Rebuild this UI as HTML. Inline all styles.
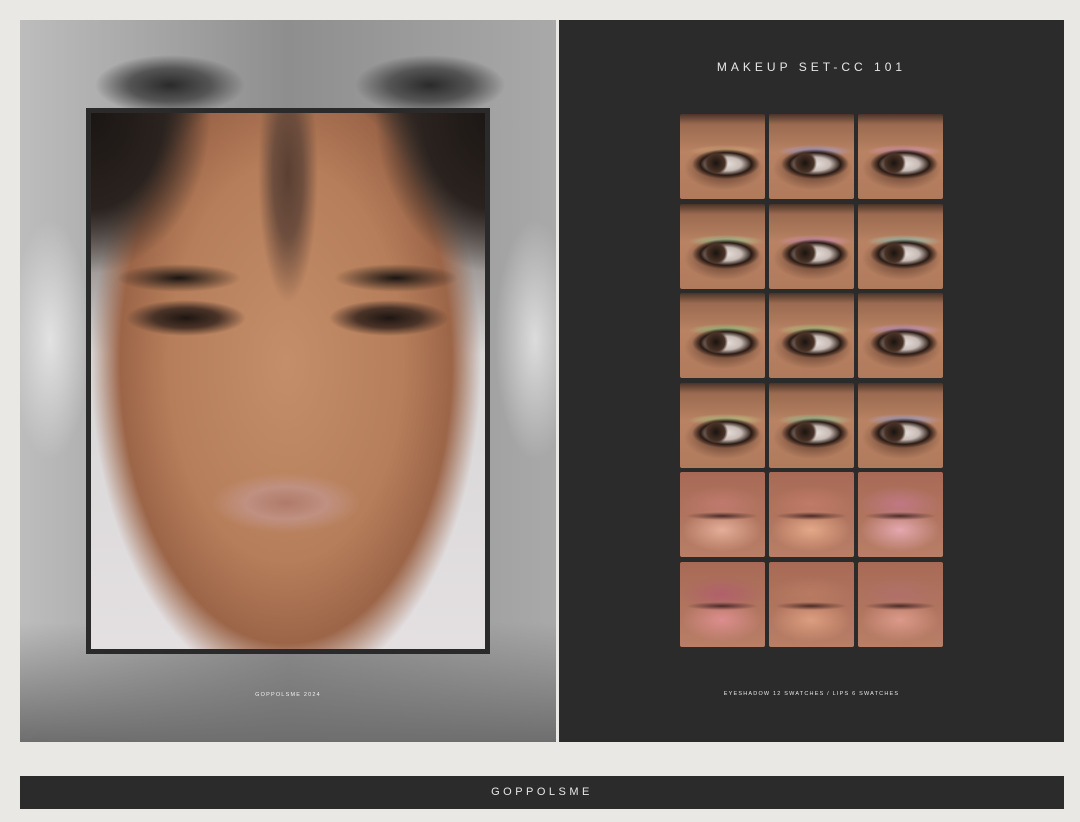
<!DOCTYPE html>
<html><head><meta charset="utf-8"><style>
*{margin:0;padding:0;box-sizing:border-box}
body{width:1080px;height:822px;background:#e9e8e4;position:relative;overflow:hidden;font-family:"Liberation Sans",sans-serif}
.abs{position:absolute}
#left{left:20px;top:20px;width:536px;height:722px;overflow:hidden;
background:
radial-gradient(ellipse 75px 30px at 150px 65px,#2a2a2a 0,#555 55%,transparent 100%),
radial-gradient(ellipse 75px 30px at 410px 65px,#2a2a2a 0,#555 55%,transparent 100%),
radial-gradient(ellipse 40px 120px at 30px 320px,#e2e2e2 0,transparent 100%),
radial-gradient(ellipse 40px 120px at 515px 320px,#dcdcdc 0,transparent 100%),
linear-gradient(90deg,#bdbdbd 0,#8e8e8e 50%,#a9a9a9 100%)}
#left:after{content:"";position:absolute;left:0;right:0;bottom:0;height:120px;background:linear-gradient(180deg,transparent,#6e6e6e)}
#frame{left:86px;top:108px;width:404px;height:546px;border:5px solid #2a2a2a;overflow:hidden;
background:
radial-gradient(ellipse 30px 130px at 197px 60px,#5a4032 0,#6e4e3e 50%,transparent 100%),
radial-gradient(ellipse 60px 18px at 95px 205px,#1e1612 0,#4a3328 55%,transparent 100%),
radial-gradient(ellipse 60px 18px at 298px 205px,#1e1612 0,#4a3328 55%,transparent 100%),
radial-gradient(ellipse 62px 14px at 88px 165px,#1a1512 0,transparent 100%),
radial-gradient(ellipse 62px 14px at 305px 165px,#1a1512 0,transparent 100%),
radial-gradient(ellipse 75px 30px at 195px 390px,#b07a6a 0,#c09080 55%,transparent 100%),
radial-gradient(ellipse 120px 160px at 0 0,#1a1614 0,#2a221e 60%,transparent 100%),
radial-gradient(ellipse 120px 160px at 404px 0,#1a1614 0,#2a221e 60%,transparent 100%),
radial-gradient(ellipse 195px 330px at 195px 250px,#c48e6a 0,#b67e5a 60%,#9c6548 85%,transparent 100%),
linear-gradient(180deg,#3a2e28 0,#d8d6d6 45%,#e4e0e2 100%)}
#right{left:559px;top:20px;width:505px;height:722px;background:#2b2b2b}
.t{left:0;width:505px;text-align:center;color:#e6e6e6}
.tile{position:absolute;width:85px;height:85px;border-radius:2px;overflow:hidden}
.eye{background:
radial-gradient(ellipse 12px 12px at 36px 49px,#1a1410 0,#4a3226 75%,transparent 100%),
radial-gradient(ellipse 34px 15px at 46px 50px,#e8e0dc 0,#c8bbb5 45%,#2a1a14 75%,transparent 100%),
radial-gradient(ellipse 40px 22px at 44px 54px,#4a2e22 0,transparent 100%),
radial-gradient(ellipse 38px 6px at 46px 37px,var(--c) 0,transparent 100%),
linear-gradient(180deg,#4a3428 0,#9a6a50 12%,#b98263 45%,#b07a5c 100%)}
.lip{background:
radial-gradient(ellipse 36px 4px at 42px 44px,#4a2a26 0,transparent 100%),
radial-gradient(ellipse 42px 18px at 42px 32px,var(--c) 0,transparent 100%),
radial-gradient(ellipse 40px 22px at 42px 58px,var(--d) 0,transparent 100%),
linear-gradient(180deg,#a86a56,#b87e66)}
#bar{left:20px;top:776px;width:1044px;height:33px;background:#2b2b2b;color:#e6e6e6;text-align:center;font-size:11px;letter-spacing:3.5px;line-height:33px}
</style></head><body>
<div id="left" class="abs"></div>
<div id="frame" class="abs"></div>
<div class="abs" style="left:20px;top:692px;width:536px;text-align:center;color:#eee;font-size:5.5px;letter-spacing:1.2px">GOPPOLSME 2024</div>
<div id="right" class="abs">
<div class="abs t" style="top:40px;font-size:12px;letter-spacing:4px">MAKEUP SET-CC 101</div>
<div class="abs t" style="top:671px;font-size:5.5px;letter-spacing:1.2px">EYESHADOW 12 SWATCHES / LIPS 6 SWATCHES</div>
</div>
<div id="tiles">
<div class="tile eye" style="left:680px;top:114px;--c:#d8b080"></div>
<div class="tile eye" style="left:769px;top:114px;--c:#a8a8e0"></div>
<div class="tile eye" style="left:858px;top:114px;--c:#e0a0c0"></div>
<div class="tile eye" style="left:680px;top:204px;--c:#a8d8a0"></div>
<div class="tile eye" style="left:769px;top:204px;--c:#d898c0"></div>
<div class="tile eye" style="left:858px;top:204px;--c:#a0d8c8"></div>
<div class="tile eye" style="left:680px;top:293px;--c:#a0d890"></div>
<div class="tile eye" style="left:769px;top:293px;--c:#b8d890"></div>
<div class="tile eye" style="left:858px;top:293px;--c:#c8a0d8"></div>
<div class="tile eye" style="left:680px;top:383px;--c:#c0d890"></div>
<div class="tile eye" style="left:769px;top:383px;--c:#a0d8a8"></div>
<div class="tile eye" style="left:858px;top:383px;--c:#a8b0e0"></div>
<div class="tile lip" style="left:680px;top:472px;--c:#c07a6e;--d:#e4ae98"></div>
<div class="tile lip" style="left:769px;top:472px;--c:#c07a68;--d:#e4a888"></div>
<div class="tile lip" style="left:858px;top:472px;--c:#c07884;--d:#e4a8b0"></div>
<div class="tile lip" style="left:680px;top:562px;--c:#b0606a;--d:#dc8e8e"></div>
<div class="tile lip" style="left:769px;top:562px;--c:#b87a62;--d:#dc9e80"></div>
<div class="tile lip" style="left:858px;top:562px;--c:#b0706a;--d:#dc9a8a"></div>
</div>
<div id="bar" class="abs">GOPPOLSME</div>
</body></html>
